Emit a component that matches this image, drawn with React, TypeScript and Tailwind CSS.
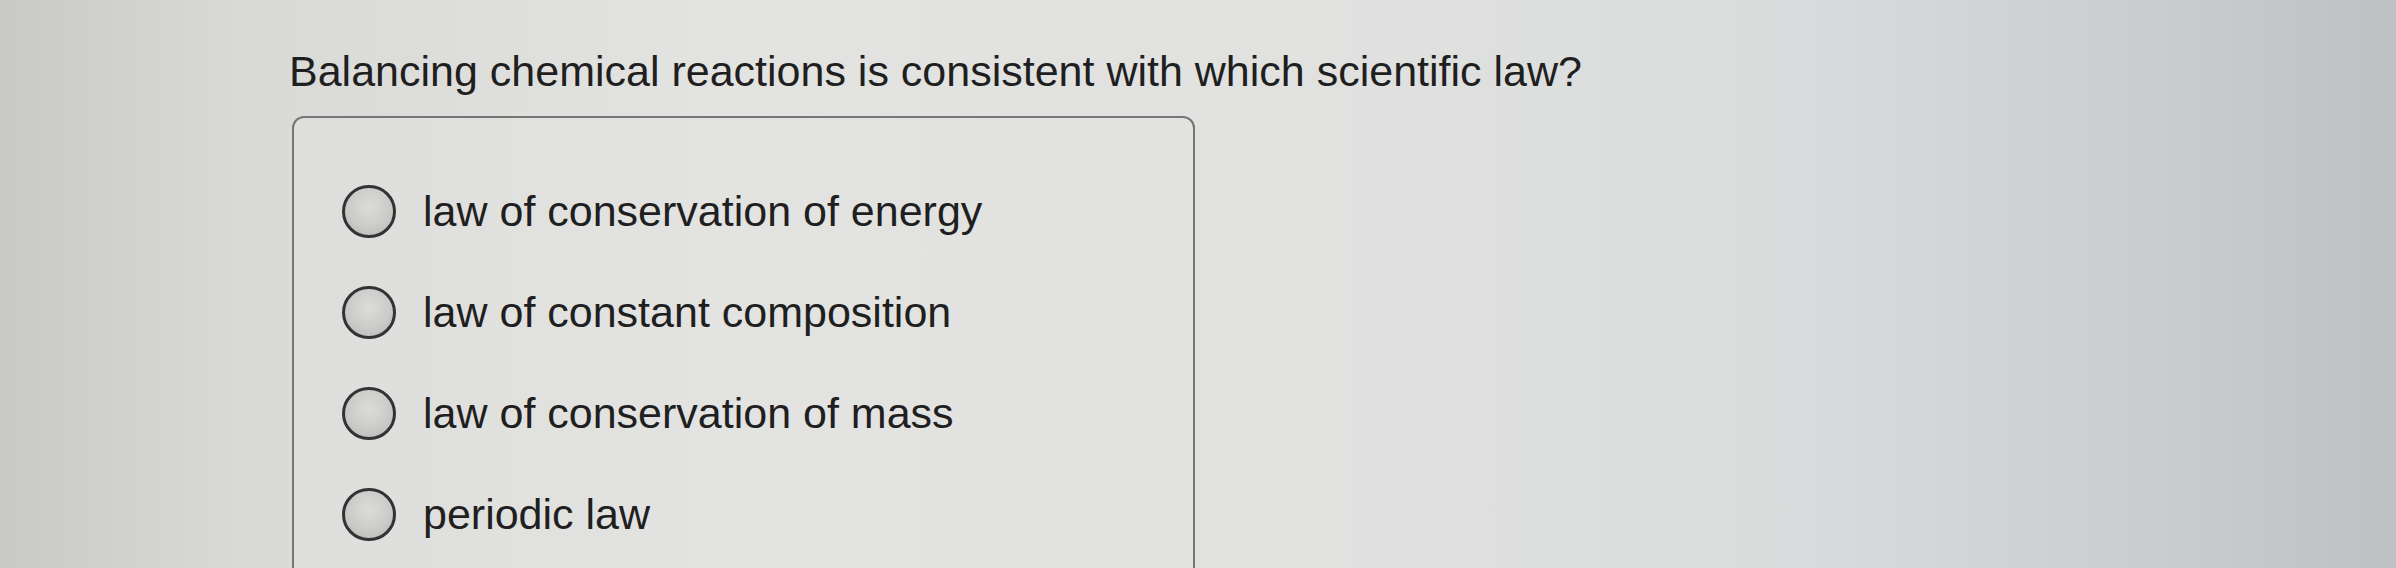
const options = [
  "law of conservation of energy",
  "law of constant composition",
  "law of conservation of mass",
  "periodic law",
]

function Radio() {
  return (
    <span
      className="
        w-[54px] h-[53px] shrink-0
        rounded-full
        border-[3px] border-[#333333]
        bg-[radial-gradient(circle_at_50%_40%,#dcdcda_0%,#cbcbc9_55%,#b4b4b2_100%)]
      "
    />
  )
}

export default function App() {
  return (
    <div
      className="
        w-full h-[568px] overflow-hidden
        bg-[linear-gradient(90deg,#c9cac8_0%,#d9dad8_10%,#e3e3e1_30%,#e1e2e0_55%,#d9dcdc_75%,#c9cdce_90%,#bdc1c3_100%)]
        pl-[289px] pt-[50px]
        font-['Liberation_Sans',Arial,sans-serif]
        text-[#1f1f1f]
      "
    >
      {/* QUESTION */}
      <h1 className="text-[43px] leading-none">
        Balancing chemical reactions is consistent with which scientific law?
      </h1>

      {/* OPTIONS BOX */}
      <div
        className="
          mt-[23px] ml-[3px]
          w-[903px] h-[520px]
          border-2 border-[#767676]
          rounded-[12px]
          bg-[#e3e3e1]/40
          pt-[43px] pl-[48px]
        "
      >
        {options.map((label) => (
          <label key={label} className="flex items-center gap-[27px] h-[101px]">
            <Radio />
            <span className="text-[43px] leading-none">{label}</span>
          </label>
        ))}
      </div>
    </div>
  )
}
